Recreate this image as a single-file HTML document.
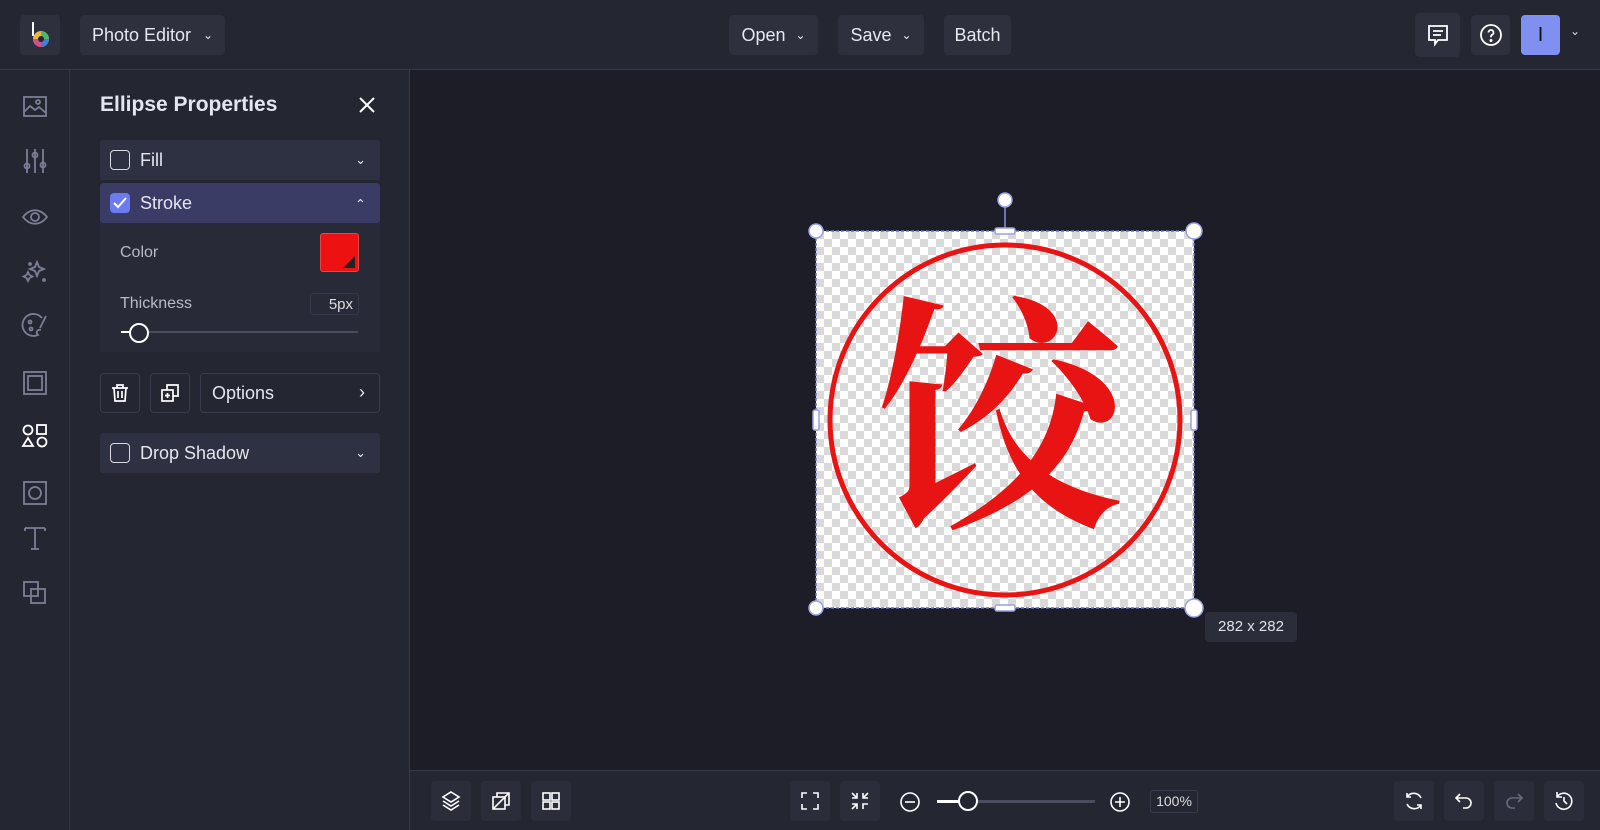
<!DOCTYPE html>
<html><head><meta charset="utf-8"><style>
*{box-sizing:border-box;margin:0;padding:0}
body{width:1600px;height:830px;overflow:hidden;background:#1c1d27;font-family:"Liberation Sans","Noto Sans CJK SC",sans-serif;color:#e4e5ee;position:relative}
.abs{position:absolute}
.top{left:0;top:0;width:1600px;height:70px;background:#242632;border-bottom:1px solid #363949}
.btn{position:absolute;background:#2e303e;border-radius:4px;color:#e6e7ef;font-size:18px;display:flex;align-items:center;justify-content:center}
.side{left:0;top:70px;width:70px;height:760px;background:#242632;border-right:1px solid #33364a}
.panel{left:70px;top:70px;width:340px;height:760px;background:#242632;border-right:1px solid #363949}
.row{position:absolute;left:100px;width:280px;height:40px;background:#2e3141;border-radius:3px;display:flex;align-items:center;font-size:18px}
.cb{width:20px;height:20px;border:1.5px solid #d8d9e3;border-radius:4px;margin:0 10px 0 10px}
.bb{position:absolute;top:781px;width:40px;height:40px;background:#2b2d3a;border-radius:4px;display:flex;align-items:center;justify-content:center}
svg{display:block}
</style></head><body>
<div class="abs top"></div>
<div class="btn" style="left:20px;top:15px;width:40px;height:40px;background:#2e303e">
<svg width="26" height="30" viewBox="0 0 26 30"><line x1="6" y1="2" x2="6" y2="16" stroke="#fff" stroke-width="2"/><circle cx="14" cy="19" r="8" fill="#e8b93a"/><path d="M14 11a8 8 0 0 1 8 8h-8z" fill="#4fb66a"/><path d="M22 19a8 8 0 0 1-8 8v-8z" fill="#3f7ee0"/><path d="M14 27a8 8 0 0 1-8-8h8z" fill="#d94c8c"/><circle cx="14" cy="19" r="3" fill="#242632"/></svg></div>
<div class="btn" style="left:80px;top:15px;width:145px;height:40px">Photo Editor<span style="margin-left:12px;font-size:12px">&#8964;</span></div>
<div class="btn" style="left:729px;top:15px;width:89px;height:40px">Open<span style="margin-left:10px;font-size:12px">&#8964;</span></div>
<div class="btn" style="left:838px;top:15px;width:86px;height:40px">Save<span style="margin-left:10px;font-size:12px">&#8964;</span></div>
<div class="btn" style="left:944px;top:15px;width:67px;height:40px">Batch</div>
<div class="btn" style="left:1415px;top:13px;width:45px;height:44px"><svg width="24" height="24" viewBox="0 0 24 24" fill="none" stroke="#fff" stroke-width="1.8"><path d="M3 3h18v14h-9l-3 4v-4H3z"/><path d="M7 8h10M7 12h8"/></svg></div>
<div class="btn" style="left:1471px;top:15px;width:39px;height:40px"><svg width="24" height="24" viewBox="0 0 24 24" fill="none" stroke="#fff" stroke-width="1.8"><circle cx="12" cy="12" r="10"/><path d="M9.5 9.5a2.5 2.5 0 1 1 3.5 2.3c-.7.4-1 1-1 1.7v.8"/><circle cx="12" cy="17.5" r=".6" fill="#fff"/></svg></div>
<div class="btn" style="left:1521px;top:15px;width:39px;height:40px;background:#8090f0;color:#111;font-size:20px">I</div>
<div class="abs" style="left:1570px;top:24px;font-size:12px;color:#ddd">&#8964;</div>

<div class="abs side"></div>
<svg class="abs" style="left:0;top:70px" width="70" height="560" fill="none" stroke="#7b7f96" stroke-width="1.8">
<rect x="24" y="27" width="22" height="19"/><path d="M24 42l6-6 5 4 4-3 7 6"/><circle cx="38" cy="32" r="2"/>
<path d="M27 79v24M35 79v24M43 79v24"/><circle cx="27" cy="96" r="2.5"/><circle cx="35" cy="85" r="2.5"/><circle cx="43" cy="95" r="2.5"/>
<path d="M23 147c7-9 17-9 24 0c-7 9-17 9-24 0z"/><circle cx="35" cy="147" r="4"/>
<path d="M37 192l2 5 5 2-5 2-2 5-2-5-5-2 5-2z"/><path d="M28 202l1.5 3 3 1.5-3 1.5-1.5 3-1.5-3-3-1.5 3-1.5z"/><circle cx="30" cy="194" r="1"/><circle cx="44" cy="210" r="1"/>
<path d="M42 248a11 11 0 1 0-4 17c-3-3 0-6 3-5"/><circle cx="30" cy="252" r="1.5"/><circle cx="31" cy="259" r="1.5"/><path d="M46 246l-6 12"/>
<rect x="24" y="302" width="22" height="22"/><rect x="28" y="306" width="14" height="14"/>
<circle cx="28" cy="360" r="4.5" stroke="#fff"/><rect x="37" y="355" width="9" height="9" stroke="#fff"/><path d="M28 368l-5 8h10z" stroke="#fff"/><circle cx="42" cy="372" r="4.5" stroke="#fff"/>
<rect x="24" y="412" width="22" height="22"/><circle cx="35" cy="423" r="6"/>
<path d="M25 458h20M35 458v21M31 479h8M25 458v3M45 458v3"/>
<rect x="24" y="512" width="14" height="14"/><rect x="31" y="519" width="14" height="14"/>
</svg>

<div class="abs panel"></div>
<div class="abs" style="left:100px;top:93px;font-size:21px;font-weight:bold">Ellipse Properties</div>
<svg class="abs" style="left:358px;top:96px" width="18" height="18" stroke="#fff" stroke-width="2"><path d="M2 2l14 14M16 2L2 16"/></svg>
<div class="row" style="top:140px"><div class="cb"></div>Fill<span style="margin-left:auto;margin-right:14px;font-size:13px">&#8964;</span></div>
<div class="row" style="top:183px;background:#3b3c66"><div class="cb" style="background:#6d7bf0;border-color:#6d7bf0;display:flex;align-items:center;justify-content:center"><svg width="14" height="12" fill="none" stroke="#fff" stroke-width="2"><path d="M1 6l4 4 8-9"/></svg></div>Stroke<span style="margin-left:auto;margin-right:14px;font-size:13px;transform:rotate(180deg)">&#8964;</span></div>
<div class="abs" style="left:100px;top:223px;width:280px;height:129px;background:#282a38"></div>
<div class="abs" style="left:120px;top:244px;font-size:16px;color:#b8bac6">Color</div>
<div class="abs" style="left:320px;top:233px;width:39px;height:39px;background:#ee1111;border:1.5px solid #e14848;border-radius:3px;overflow:hidden"><div class="abs" style="right:3px;bottom:3px;width:0;height:0;border-left:12px solid transparent;border-bottom:12px solid #222"></div></div>
<div class="abs" style="left:120px;top:295px;font-size:16px;color:#b8bac6">Thickness</div>
<div class="abs" style="left:310px;top:293px;width:49px;height:22px;border:1px solid #363949;border-radius:3px;font-size:15px;text-align:right;padding:2px 5px;color:#ddd">5px</div>
<div class="abs" style="left:121px;top:331px;width:237px;height:2px;background:#4a4d5e"></div>
<div class="abs" style="left:121px;top:331px;width:18px;height:2px;background:#fff"></div>
<div class="abs" style="left:129px;top:323px;width:20px;height:20px;border:2.5px solid #fff;border-radius:50%;background:#282a38"></div>
<div class="abs" style="left:100px;top:373px;width:40px;height:40px;border:1px solid #393c4c;border-radius:4px"><svg style="margin:9px" width="20" height="20" fill="none" stroke="#fff" stroke-width="1.7"><path d="M2 5h16M7 5V2h6v3M4 5l1 13h10l1-13M8 8v7M12 8v7"/></svg></div>
<div class="abs" style="left:150px;top:373px;width:40px;height:40px;border:1px solid #393c4c;border-radius:4px"><svg style="margin:9px" width="20" height="20" fill="none" stroke="#fff" stroke-width="1.7"><rect x="2" y="7" width="11" height="11"/><path d="M7 7V2h11v11h-5M5 12.5h5M7.5 10v5"/></svg></div>
<div class="abs" style="left:200px;top:373px;width:180px;height:40px;border:1px solid #393c4c;border-radius:4px;font-size:18px;padding:9px 11px">Options<span style="position:absolute;right:14px;top:8px">&#8250;</span></div>
<div class="row" style="top:433px"><div class="cb"></div>Drop Shadow<span style="margin-left:auto;margin-right:14px;font-size:13px">&#8964;</span></div>

<svg class="abs" style="left:0;top:0" width="1600" height="770">
<defs><pattern id="ck" width="16" height="16" patternUnits="userSpaceOnUse" x="816" y="231"><rect width="16" height="16" fill="#fff"/><rect width="8" height="8" fill="#d9d9d9"/><rect x="8" y="8" width="8" height="8" fill="#d9d9d9"/></pattern></defs>
<rect x="816" y="231" width="378" height="377" fill="url(#ck)"/>
<circle cx="1005" cy="420" r="175" fill="none" stroke="#e81414" stroke-width="5"/>
<text x="1000" y="508" text-anchor="middle" font-family="Noto Serif CJK SC,serif" font-weight="bold" font-size="250" fill="#e81414">饺</text>
<rect x="816" y="231" width="378" height="377" fill="none" stroke="#6b74c8" stroke-width="1.5" stroke-dasharray="3 2"/>
<line x1="1005" y1="200" x2="1005" y2="231" stroke="#8890d8" stroke-width="1.5"/>
<g fill="#fff" stroke="#9aa0e0" stroke-width="1.5"><circle cx="1005" cy="200" r="7"/><circle cx="816" cy="231" r="7"/><circle cx="1194" cy="231" r="8"/><circle cx="816" cy="608" r="7"/><circle cx="1194" cy="608" r="9"/><rect x="995" y="228" width="20" height="6" rx="2"/><rect x="995" y="605" width="20" height="6" rx="2"/><rect x="813" y="410" width="6" height="20" rx="2"/><rect x="1191" y="410" width="6" height="20" rx="2"/></g>
</svg>
<div class="abs" style="left:1205px;top:612px;width:92px;height:30px;background:#2b2d3a;border-radius:4px;font-size:15px;text-align:center;line-height:30px;color:#e0e0e8">282 x 282</div>

<div class="abs" style="left:410px;top:770px;width:1190px;height:60px;background:#242632;border-top:1px solid #363949"></div>
<div class="bb" style="left:431px"><svg width="24" height="24" fill="none" stroke="#fff" stroke-width="1.6"><path d="M12 3l8 5-8 5-8-5zM4 12l8 5 8-5M4 16l8 5 8-5"/></svg></div>
<div class="bb" style="left:481px"><svg width="24" height="24" fill="none" stroke="#fff" stroke-width="1.6"><rect x="4" y="8" width="12" height="12"/><path d="M8 8V4h12v12h-4M4 20L20 4"/></svg></div>
<div class="bb" style="left:531px"><svg width="24" height="24" fill="none" stroke="#fff" stroke-width="1.6"><rect x="4" y="4" width="7" height="7"/><rect x="13" y="4" width="7" height="7"/><rect x="4" y="13" width="7" height="7"/><rect x="13" y="13" width="7" height="7"/></svg></div>
<div class="bb" style="left:790px"><svg width="24" height="24" fill="none" stroke="#fff" stroke-width="1.6"><path d="M4 9V4h5M15 4h5v5M20 15v5h-5M9 20H4v-5"/></svg></div>
<div class="bb" style="left:840px"><svg width="24" height="24" fill="none" stroke="#fff" stroke-width="1.6"><path d="M4 9h5V4M9 9L4 4M15 4v5h5M15 9l5-5M4 15h5v5M9 15l-5 5M20 15h-5v5"/></svg></div>
<svg class="abs" style="left:898px;top:790px" width="24" height="24" fill="none" stroke="#fff" stroke-width="1.6"><circle cx="12" cy="12" r="9"/><path d="M7 12h10"/></svg>
<div class="abs" style="left:937px;top:800px;width:158px;height:3px;background:#4a4d5e"></div>
<div class="abs" style="left:937px;top:800px;width:30px;height:3px;background:#fff"></div>
<div class="abs" style="left:958px;top:791px;width:20px;height:20px;border:2.5px solid #fff;border-radius:50%;background:#242632"></div>
<svg class="abs" style="left:1108px;top:790px" width="24" height="24" fill="none" stroke="#fff" stroke-width="1.6"><circle cx="12" cy="12" r="9"/><path d="M7 12h10M12 7v10"/></svg>
<div class="abs" style="left:1150px;top:790px;width:48px;height:23px;border:1px solid #393c4c;border-radius:3px;font-size:14px;text-align:center;line-height:21px;color:#ddd">100%</div>
<div class="bb" style="left:1394px"><svg width="24" height="24" fill="none" stroke="#fff" stroke-width="1.6"><path d="M19 9a8 8 0 0 0-14-1M5 15a8 8 0 0 0 14 1M5 4v4h4M19 20v-4h-4"/></svg></div>
<div class="bb" style="left:1444px"><svg width="24" height="24" fill="none" stroke="#fff" stroke-width="1.6"><path d="M8 5L4 9l4 4M4 9h10a5 5 0 0 1 0 10h-3"/></svg></div>
<div class="bb" style="left:1494px"><svg width="24" height="24" fill="none" stroke="#666a7c" stroke-width="1.6"><path d="M16 5l4 4-4 4M20 9H10a5 5 0 0 0 0 10h3"/></svg></div>
<div class="bb" style="left:1544px"><svg width="24" height="24" fill="none" stroke="#fff" stroke-width="1.6"><path d="M5 8a8 8 0 1 1-1 6M5 3v5h5M12 8v4l3 3"/></svg></div>
</body></html>
